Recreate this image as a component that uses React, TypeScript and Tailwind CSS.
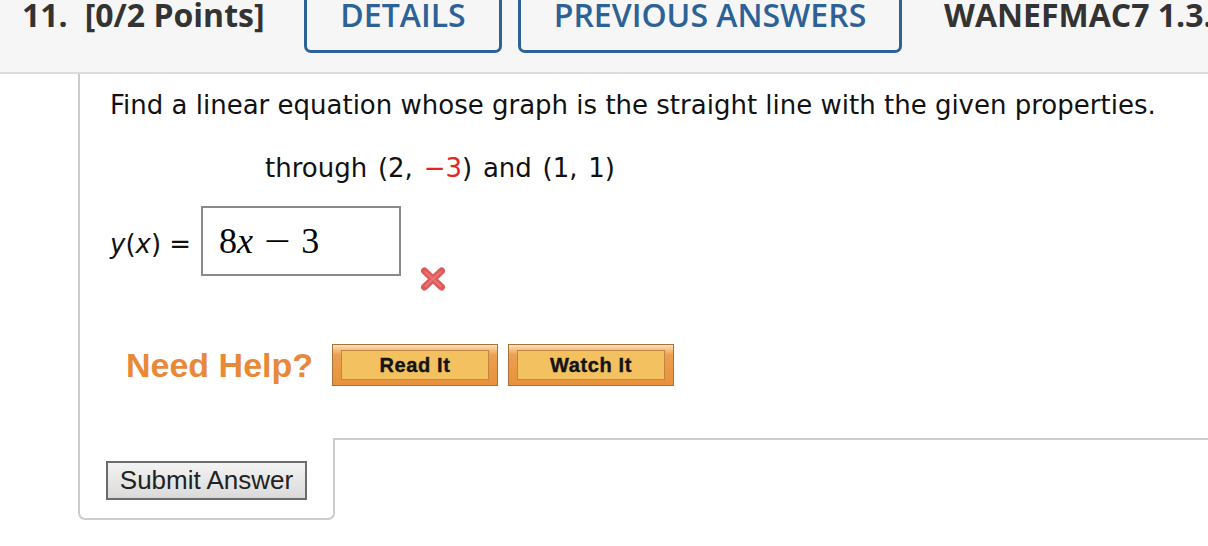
import { Fragment } from "react";

const tabs = [
  { label: "DETAILS", width: "w-[198px]" },
  { label: "PREVIOUS ANSWERS", width: "w-[384px]" },
];

const helpButtons = ["Read It", "Watch It"];

const WrongMark = () => (
  <svg width="28" height="26" viewBox="0 0 28 26" className="block">
    <path d="M5.5 5 L22.5 21 M22.5 5 L5.5 21" stroke="#e15a5a" strokeWidth="7" strokeLinecap="round" />
    <path d="M6.5 6 L21.5 20 M21.5 6 L6.5 20" stroke="#ee8c8c" strokeWidth="2" strokeLinecap="round" opacity="0.55" />
  </svg>
);

const App = () => {
  return (
    <div className="w-[1208px] h-[546px] overflow-hidden bg-white">
      {/* question header */}
      <div className="h-[74px] bg-[#f6f6f6] border-b-2 border-[#dddddd] flex items-start pl-[22px] font-['Open_Sans',sans-serif] text-[32px] leading-[30px] whitespace-nowrap overflow-hidden">
        <div className="w-[282px] shrink-0 flex font-bold text-[#333333]">
          <span>11.</span>
          <span className="ml-[17px]">[0/2 Points]</span>
        </div>
        {tabs.map((tab, i) => (
          <Fragment key={tab.label}>
            <div
              className={`${tab.width} ${i > 0 ? "ml-[16px]" : ""} shrink-0 h-[53px] border-x-3 border-b-3 border-[#2d6296] rounded-b-[7px] flex justify-center font-semibold text-[#2d6296]`}
            >
              {tab.label}
            </div>
          </Fragment>
        ))}
        <div className="ml-[42px] shrink-0 font-bold text-[#333333]">WANEFMAC7 1.3.</div>
      </div>

      {/* question body */}
      <div className="ml-[78px]">
        <div className="border-l-2 border-[#cccccc] pl-[30px] pt-[16px] pb-[52px] font-['DejaVu_Sans',sans-serif] text-[26px] leading-[30px] text-[#111111]">
          <p>Find a linear equation whose graph is the straight line with the given properties.</p>
          <p className="mt-[33px] ml-[155px] [word-spacing:2.5px]">
            through (2, <span className="text-[#e5261f]">−3</span>) and (1, 1)
          </p>

          <div className="mt-[23px] flex items-start">
            <div className="w-[93px] mt-[23px] -ml-[2px] pl-[2px]">
              <span className="italic">y</span>(<span className="italic">x</span>) =
            </div>
            <div className="w-[200px] h-[70px] border-2 border-[#8a8a8a] pl-[16px] pt-[15px] font-['Liberation_Serif',serif] text-[36px] leading-[36px] text-black whitespace-nowrap">
              8<span className="italic">x</span>
              <span className="inline-block mx-[14px] scale-x-[1.3]">−</span>3
            </div>
            <div className="ml-[18px] mt-[60px]">
              <WrongMark />
            </div>
          </div>

          <div className="mt-[52px] flex items-center pl-[16px]">
            <div className="w-[206px] font-['Liberation_Sans',Arial,sans-serif] font-bold text-[34px] leading-[42px] text-[#e8893a]">
              Need Help?
            </div>
            <div className="flex gap-[10px]">
              {helpButtons.map((b) => (
                <div
                  key={b}
                  className="w-[166px] h-[42px] border border-[#a8733a] bg-[linear-gradient(to_bottom,#fbe0b8,#ec9f4e_25%,#e8913c)] px-[8px] py-[5px]"
                >
                  <div className="h-full border border-[#bf8645] bg-[#f3c160] flex items-center justify-center font-['Liberation_Sans',Arial,sans-serif] font-bold text-[20px] tracking-[0.6px] text-[#141414] [-webkit-text-stroke:0.4px_#141414]">
                    {b}
                  </div>
                </div>
              ))}
            </div>
          </div>
        </div>

        <div className="flex">
          <div className="w-[257px] h-[82px] border-l-2 border-r-2 border-b-2 border-[#cccccc] rounded-b-[7px] pt-[23px] pl-[26px]">
            <button className="w-[201px] h-[39px] border-2 border-[#6b6b6b] bg-[linear-gradient(to_bottom,#f3f3f3,#dadada)] font-['Liberation_Sans',Arial,sans-serif] text-[26px] leading-[35px] text-[#222222]">
              Submit Answer
            </button>
          </div>
          <div className="flex-1 border-t-2 border-[#cccccc]" />
        </div>
      </div>
    </div>
  );
};

export default App;
